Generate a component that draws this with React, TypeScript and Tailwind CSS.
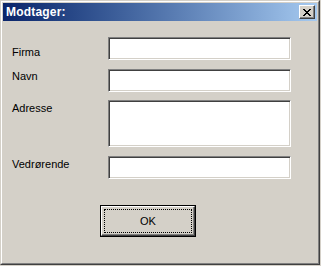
import React from "react";

const sunken =
  "border border-t-[#808080] border-l-[#808080] border-r-white border-b-white shadow-[inset_1px_1px_0_0_#404040,inset_-1px_-1px_0_0_#d4d0c8] bg-white";

function Row({
  label,
  labelTop,
  height,
  mt,
}: {
  label: string;
  labelTop: string;
  height: string;
  mt: string;
}) {
  return (
    <div className={`flex ${mt}`}>
      <div className={`w-[102px] pl-[6px] leading-[13px] ${labelTop}`}>{label}</div>
      <div className={`w-[183px] ${height} ${sunken}`} />
    </div>
  );
}

export default function App() {
  return (
    <div
      className="w-[321px] h-[266px] bg-[#d4d0c8] text-[11px] text-black"
      style={{ fontFamily: '"Liberation Sans", Arial, sans-serif' }}
    >
      <div className="w-[320px] h-[265px] border border-t-[#d4d0c8] border-l-[#d4d0c8] border-r-[#404040] border-b-[#404040]">
        <div className="w-full h-full border border-t-white border-l-white border-r-[#808080] border-b-[#808080] p-px flex flex-col">
          {/* Title bar */}
          <div className="h-[18px] flex items-center justify-between bg-gradient-to-r from-[#0a246a] to-[#a6caf0] pl-[3px] pr-[2px]">
            <span className="text-white font-bold text-[12px] leading-[18px] tracking-[0.2px]">Modtager:</span>
            <div className="w-[16px] h-[14px] bg-[#d4d0c8] border border-t-white border-l-white border-r-[#404040] border-b-[#404040] shadow-[inset_-1px_-1px_0_0_#808080] flex items-center justify-center">
              <svg width="8" height="7" viewBox="0 0 8 7" shapeRendering="crispEdges">
                <path
                  d="M0 0h2v1h-2zM6 0h2v1h-2zM1 1h2v1h-2zM5 1h2v1h-2zM2 2h4v1h-4zM3 3h2v1h-2zM2 4h4v1h-4zM1 5h2v1h-2zM5 5h2v1h-2zM0 6h2v1h-2zM6 6h2v1h-2z"
                  fill="#000"
                />
              </svg>
            </div>
          </div>

          {/* Content */}
          <div className="flex flex-col pl-[3px]">
            <Row label="Firma" labelTop="mt-[9px]" height="h-[23px]" mt="mt-[16px]" />
            <Row label="Navn" labelTop="mt-[1px]" height="h-[23px]" mt="mt-[9px]" />
            <Row label="Adresse" labelTop="mt-[2px]" height="h-[47px]" mt="mt-[8px]" />
            <Row label="Vedrørende" labelTop="mt-[2px]" height="h-[23px]" mt="mt-[9px]" />
            <div className="mt-[26px] pl-[94px]">
              <button className="w-[96px] h-[32px] border border-black bg-[#d4d0c8] p-0 block">
                <div className="w-full h-full border border-t-white border-l-white border-r-[#404040] border-b-[#404040] shadow-[inset_-1px_-1px_0_0_#808080] p-[2px]">
                  <div className="w-full h-full border border-dotted border-black flex items-center justify-center text-[11px]">
                    OK
                  </div>
                </div>
              </button>
            </div>
          </div>
        </div>
      </div>
    </div>
  );
}
